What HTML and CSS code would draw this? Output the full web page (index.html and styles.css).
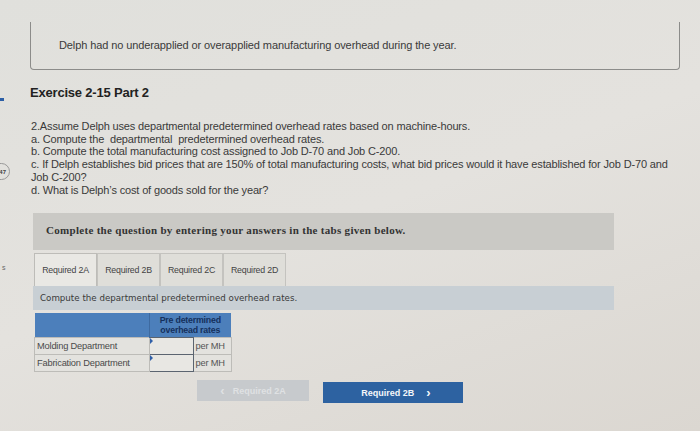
FILE: index.html
```html
<!DOCTYPE html>
<html>
<head>
<meta charset="utf-8">
<link rel="stylesheet" href="styles.css">
</head>
<body>
<div class="page">
  <span class="edge-dash"></span>
  <span class="edge-circle">47</span>
  <span class="edge-s">s</span>

  <div class="topbox">
    <p>Delph had no underapplied or overapplied manufacturing overhead during the year.</p>
  </div>

  <h2 class="title">Exercise 2-15 Part 2</h2>

  <div class="problem">
    <p>2.Assume Delph uses departmental predetermined overhead rates based on machine-hours.</p>
    <p>a. Compute the&nbsp; departmental&nbsp; predetermined overhead rates.</p>
    <p>b. Compute the total manufacturing cost assigned to Job D-70 and Job C-200.</p>
    <p>c. If Delph establishes bid prices that are 150% of total manufacturing costs, what bid prices would it have established for Job D-70 and Job C-200?</p>
    <p>d. What is Delph’s cost of goods sold for the year?</p>
  </div>

  <div class="instr">Complete the question by entering your answers in the tabs given below.</div>

  <div class="tabs">
    <div class="tab active">Required 2A</div>
    <div class="tab">Required 2B</div>
    <div class="tab">Required 2C</div>
    <div class="tab">Required 2D</div>
  </div>

  <div class="prompt">Compute the departmental predetermined overhead rates.</div>

  <table class="rates">
    <thead>
      <tr>
        <th class="blank"></th>
        <th colspan="2" class="hdr">Pre determined<br>overhead rates</th>
      </tr>
    </thead>
    <tbody>
      <tr>
        <td class="label">Molding Department</td>
        <td class="input"><span class="mark"></span></td>
        <td class="unit">per MH</td>
      </tr>
      <tr>
        <td class="label">Fabrication Department</td>
        <td class="input"><span class="mark"></span></td>
        <td class="unit">per MH</td>
      </tr>
    </tbody>
  </table>

  <div class="nav">
    <div class="btn prev"><span class="chev">&lsaquo;</span> Required 2A</div>
    <div class="btn next">Required 2B <span class="chev">&rsaquo;</span></div>
  </div>
</div>
</body>
</html>
```
FILE: styles.css
```css
html, body {
  margin: 0;
  padding: 0;
}
body {
  width: 700px;
  height: 431px;
  overflow: hidden;
  background: linear-gradient(160deg, #e0e0dc 0%, #e4e2de 50%, #dbd7d1 100%);
  font-family: "Liberation Sans", Arial, sans-serif;
  color: #333;
}
.page {
  position: relative;
  height: 431px;
  padding-top: 22px;
  box-sizing: border-box;
}
.edge-dash {
  position: absolute;
  left: 0;
  top: 98px;
  width: 4px;
  height: 3px;
  background: #2c5fa6;
}
.edge-circle {
  position: absolute;
  left: -14px;
  top: 163px;
  width: 24px;
  height: 17px;
  border: 1px solid #999;
  border-radius: 9px;
  font-size: 6px;
  font-weight: bold;
  line-height: 17px;
  text-align: right;
  padding-right: 3px;
  box-sizing: border-box;
  color: #444;
}
.edge-s {
  position: absolute;
  left: 2px;
  top: 264px;
  font-size: 7px;
  color: #666;
}
.topbox {
  margin-left: 30px;
  width: 650px;
  height: 48px;
  box-sizing: border-box;
  border: 1px solid #8c8c8a;
  border-top: none;
  border-radius: 0 0 4px 4px;
  padding-left: 28px;
  display: flex;
  align-items: center;
}
.topbox p {
  margin: 0;
  font-size: 11px;
  letter-spacing: -0.1px;
  color: #3a3a3a;
  padding-bottom: 1px;
}
.title {
  margin: 15px 0 0 30px;
  font-size: 13px;
  letter-spacing: -0.2px;
  font-weight: bold;
  color: #222;
  line-height: 15px;
}
.problem {
  margin: 20px 0 0 31px;
  width: 650px;
}
.problem p {
  margin: 0;
  font-size: 11px;
  line-height: 12.7px;
  letter-spacing: -0.15px;
  color: #3a3a3a;
}
.instr {
  margin: 17px 0 0 33px;
  width: 581px;
  height: 37px;
  box-sizing: border-box;
  background: #cac9c5;
  padding-left: 13px;
  display: flex;
  align-items: center;
  font-family: "Liberation Serif", "Times New Roman", serif;
  font-weight: bold;
  font-size: 11px;
  letter-spacing: 0.3px;
  color: #333;
  padding-bottom: 4px;
}
.tabs {
  margin: 3px 0 0 34px;
  display: flex;
  height: 33px;
}
.tab {
  width: 63px;
  box-sizing: border-box;
  border: 1px solid #c4c3bf;
  border-bottom: none;
  background: #dfded9;
  font-size: 8.8px;
  letter-spacing: -0.2px;
  color: #444;
  display: flex;
  align-items: center;
  justify-content: center;
  padding-bottom: 1px;
}
.tab.active {
  background: #e9e8e4;
  border-color: #bdbcb8;
}
.prompt {
  margin-left: 33px;
  width: 581px;
  height: 24px;
  box-sizing: border-box;
  background: #c8cfd4;
  padding-left: 7px;
  display: flex;
  align-items: center;
  font-family: "DejaVu Sans", Verdana, sans-serif;
  font-size: 8.7px;
  color: #3a3a3a;
}
.rates {
  margin: 3px 0 0 34px;
  border-collapse: collapse;
  font-size: 9.3px;
  letter-spacing: -0.2px;
}
.rates th {
  background: #4c7fbb;
  height: 24px;
  padding: 0;
}
.rates th.blank {
  width: 114px;
  border-right: 1px solid #3e6aa0;
}
.rates th.hdr {
  width: 80px;
  color: #15305c;
  font-size: 8.8px;
  line-height: 10px;
  font-weight: bold;
  text-align: center;
}
.rates td {
  height: 16px;
  padding: 0;
  border: 1px solid #bdbcb8;
  background: #e3e2de;
}
.rates td.label {
  padding-left: 2px;
  color: #4a4a4a;
}
.rates td.input {
  width: 43px;
  border: 1.5px solid #5b6470;
  position: relative;
  background: #e8e7e3;
}
.mark {
  position: absolute;
  left: 0;
  top: 0;
  width: 0;
  height: 0;
  border-top: 3px solid transparent;
  border-bottom: 3px solid transparent;
  border-left: 3px solid #2f5fa8;
}
.rates td.unit {
  width: 35px;
  color: #555;
  padding-left: 2px;
}
.nav {
  margin: 8px 0 0 197px;
  display: flex;
  align-items: flex-start;
  gap: 14px;
}
.btn {
  height: 21px;
  display: flex;
  align-items: center;
  justify-content: center;
  font-size: 9px;
  font-weight: bold;
}
.btn.prev {
  width: 112px;
  background: #c7cacd;
  color: #dfe1e3;
}
.btn.next {
  width: 140px;
  margin-top: 2px;
  background: #2d62a1;
  color: #f4f6fa;
  padding-left: 6px;
  box-sizing: border-box;
}
.btn.next .chev {
  margin-left: 12px;
  font-size: 13px;
}
.btn.prev .chev {
  margin-right: 8px;
  font-size: 13px;
}
```
